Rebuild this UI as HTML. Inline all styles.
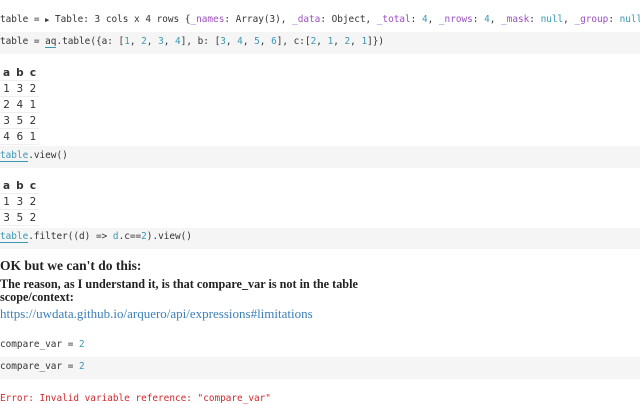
<!DOCTYPE html>
<html><head><style>
body{margin:0;width:640px;height:400px;overflow:hidden;background:#fff;position:relative;font-family:"DejaVu Sans Mono","Liberation Mono",monospace;font-size:9.4px;color:#333}
.a{position:absolute;left:0;white-space:nowrap}
.g{position:absolute;left:0;width:640px;background:#f5f5f5}
.n{color:#3a98b4}.p{color:#9b4fc0}.u{border-bottom:1px solid #3a98b4}
table{position:absolute;left:0;border-collapse:collapse;font-family:"DejaVu Sans",sans-serif;font-size:10.5px;color:#333}
td,th{padding:0 3px 0 3px;height:15px;border-bottom:1px solid #eee;text-align:center}
th{font-weight:bold}
.s{font-family:"Liberation Serif","DejaVu Serif",serif;color:#222}
</style></head><body>
<div class="a" style="top:14px">table = <span style="font-size:7px">▶</span> Table: 3 cols x 4 rows {<span class="p">_names</span>: Array(3), <span class="p">_data</span>: Object, <span class="p">_total</span>: <span class="n">4</span>, <span class="p">_nrows</span>: <span class="n">4</span>, <span class="p">_mask</span>: <span class="n">null</span>, <span class="p">_group</span>: <span class="n">null</span></div>
<div class="g" style="top:32px;height:22px"></div>
<div class="a" style="top:36px">table = <span class="u">aq</span>.table({a: [<span class="n">1</span>, <span class="n">2</span>, <span class="n">3</span>, <span class="n">4</span>], b: [<span class="n">3</span>, <span class="n">4</span>, <span class="n">5</span>, <span class="n">6</span>], c:[<span class="n">2</span>, <span class="n">1</span>, <span class="n">2</span>, <span class="n">1</span>]})</div>
<table style="top:65px"><tr><th>a</th><th>b</th><th>c</th></tr><tr><td>1</td><td>3</td><td>2</td></tr><tr><td>2</td><td>4</td><td>1</td></tr><tr><td>3</td><td>5</td><td>2</td></tr><tr><td>4</td><td>6</td><td>1</td></tr></table>
<div class="g" style="top:146px;height:22px"></div>
<div class="a" style="top:150px"><span class="n u">table</span>.view()</div>
<table style="top:178px"><tr><th>a</th><th>b</th><th>c</th></tr><tr><td>1</td><td>3</td><td>2</td></tr><tr><td>3</td><td>5</td><td>2</td></tr></table>
<div class="g" style="top:228px;height:21px"></div>
<div class="a" style="top:231px"><span class="n u">table</span>.filter((d) =&gt; <span class="n">d</span>.c==<span class="n">2</span>).view()</div>
<div class="a s" style="top:258px;font-size:13.5px;font-weight:bold">OK but we can't do this:</div>
<div class="a s" style="top:278px;font-size:12.2px;font-weight:bold;line-height:13px">The reason, as I understand it, is that compare_var is not in the table<br>scope/context:</div>
<div class="a s" style="top:306px;font-size:13px;color:#3b7fb8">https://uwdata.github.io/arquero/api/expressions#limitations</div>
<div class="a" style="top:339px">compare_var = <span class="n">2</span></div>
<div class="g" style="top:357px;height:22px"></div>
<div class="a" style="top:361px">compare_var = <span class="n">2</span></div>
<div class="a" style="top:393px;color:#d0282d">Error: Invalid variable reference: "compare_var"</div>
</body></html>
